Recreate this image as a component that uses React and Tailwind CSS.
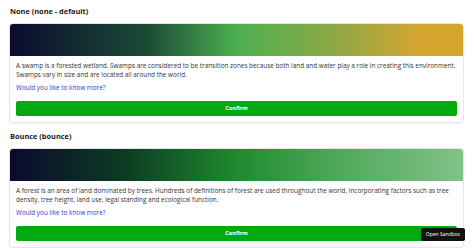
import React from "react";

function Card({ title, gradient, text }) {
  return (
    <section>
      <h2 className="text-[7.4px] leading-[10px] font-bold text-[#222] pl-[1px]">{title}</h2>
      <div className="mt-[7px] w-[455px] bg-white border border-[#e6e6e6] rounded-[4px] shadow-[0_1px_2px_rgba(0,0,0,0.06)] overflow-hidden">
        <div className={"h-[32px] " + gradient} />
        <div className="px-[6px] pt-[5px] pb-[6px]">
          <p className="text-[6.4px] leading-[9px] text-[#333]">{text}</p>
          <div className="mt-[4px] text-[6.4px] leading-[9px] text-[#3333cc]">Would you like to know more?</div>
          <button className="mt-[4px] w-full h-[15px] rounded-[2px] bg-[#04a90f] text-white text-[5.6px] font-bold leading-[15px] text-center">
            Confirm
          </button>
        </div>
      </div>
    </section>
  );
}

export default function App() {
  return (
    <div className="relative w-[474px] h-[248px] overflow-hidden bg-white font-['Open_Sans',sans-serif]">
      <div className="pl-[9px] pt-[6px] flex flex-col gap-[8px]">
        <Card
          title="None (none - default)"
          gradient="bg-[linear-gradient(to_right,#0a0a2e_0%,#1a4a35_30%,#4caf50_50%,#8fa845_72%,#d4a52f_90%,#d4a52f_100%)]"
          text="A swamp is a forested wetland. Swamps are considered to be transition zones because both land and water play a role in creating this environment. Swamps vary in size and are located all around the world."
        />
        <Card
          title="Bounce (bounce)"
          gradient="bg-[linear-gradient(to_right,#0a0a2e_0%,#0d3a22_25%,#1f8a2e_50%,#4ea85a_72%,#82c288_100%)]"
          text="A forest is an area of land dominated by trees. Hundreds of definitions of forest are used throughout the world, incorporating factors such as tree density, tree height, land use, legal standing and ecological function."
        />
      </div>
      <div className="absolute left-[421px] top-[228px] w-[44px] h-[13px] bg-[#111] rounded-[2px] text-white text-[5px] leading-[13px] text-center">
        Open Sandbox
      </div>
    </div>
  );
}
